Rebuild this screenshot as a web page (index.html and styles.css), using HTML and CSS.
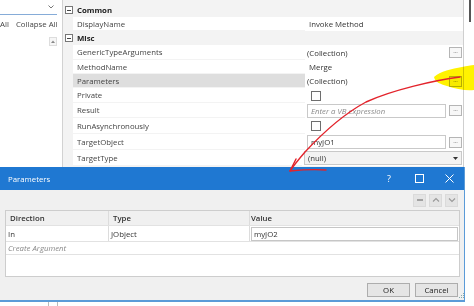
FILE: index.html
```html
<!DOCTYPE html>
<html lang="en">
<head>
  <meta charset="UTF-8" />
  <title>Invoke Method - Parameters</title>
  <link rel="stylesheet" href="styles.css">
</head>
<body>
  <div class="screen">

    <div class="top">
      <aside class="outline">
        <div class="outline-select">
          <svg class="chev" width="6" height="4" viewBox="0 0 6 4"><path d="M0.5 0.5 L3 3 L5.5 0.5" fill="none" stroke="#777" stroke-width="1"/></svg>
        </div>
        <div class="outline-links">
          <span>All</span>
          <span>Collapse All</span>
        </div>
        <div class="outline-body">
          <div class="scroll-up">
            <svg width="4" height="3" viewBox="0 0 4 3"><path d="M0 3 L2 0.5 L4 3 Z" fill="#888"/></svg>
          </div>
        </div>
      </aside>

      <section class="props">
        <div class="group"><span class="expander"></span>Common</div>
        <div class="prop">
          <div class="prop-name">DisplayName</div>
          <div class="prop-value"><span class="val">Invoke Method</span></div>
        </div>
        <div class="group"><span class="expander"></span>Misc</div>
        <div class="prop h15">
          <div class="prop-name">GenericTypeArguments</div>
          <div class="prop-value"><span class="val tight">(Collection)</span><span class="dots">...</span></div>
        </div>
        <div class="prop">
          <div class="prop-name">MethodName</div>
          <div class="prop-value"><span class="val">Merge</span></div>
        </div>
        <div class="prop selected">
          <div class="prop-name">Parameters</div>
          <div class="prop-value"><span class="val tight">(Collection)</span><span class="dots">...</span></div>
        </div>
        <div class="prop h15">
          <div class="prop-name">Private</div>
          <div class="prop-value"><span class="check"></span></div>
        </div>
        <div class="prop h15">
          <div class="prop-name">Result</div>
          <div class="prop-value"><span class="textbox placeholder">Enter a VB expression</span><span class="dots">...</span></div>
        </div>
        <div class="prop h16">
          <div class="prop-name">RunAsynchronously</div>
          <div class="prop-value"><span class="check"></span></div>
        </div>
        <div class="prop h16">
          <div class="prop-name">TargetObject</div>
          <div class="prop-value"><span class="textbox">myJO1</span><span class="dots">...</span></div>
        </div>
        <div class="prop h16">
          <div class="prop-name">TargetType</div>
          <div class="prop-value">
            <span class="combo">(null)
              <svg width="5" height="3" viewBox="0 0 5 3"><path d="M0 0 L5 0 L2.5 3 Z" fill="#333"/></svg>
            </span>
          </div>
        </div>
      </section>

      <div class="side-scroll"><span class="thumb"></span></div>
    </div>

    <div class="dialog">
      <div class="titlebar">
        <span class="title">Parameters</span>
        <span class="tb-btn">?</span>
        <span class="tb-btn"><span class="max-box"></span></span>
        <span class="tb-btn">
          <svg width="9" height="9" viewBox="0 0 9 9"><path d="M0.5 0.5 L8.5 8.5 M8.5 0.5 L0.5 8.5" stroke="#fff" stroke-width="1"/></svg>
        </span>
      </div>

      <div class="toolbar">
        <span class="tool">
          <svg width="8" height="8" viewBox="0 0 8 8"><path d="M1 4 H7" stroke="#777" stroke-width="1.2"/></svg>
        </span>
        <span class="tool">
          <svg width="8" height="8" viewBox="0 0 8 8"><path d="M1 5.5 L4 2.5 L7 5.5" fill="none" stroke="#999" stroke-width="1.1"/></svg>
        </span>
        <span class="tool">
          <svg width="8" height="8" viewBox="0 0 8 8"><path d="M1 2.5 L4 5.5 L7 2.5" fill="none" stroke="#999" stroke-width="1.1"/></svg>
        </span>
      </div>

      <div class="args">
        <div class="args-row args-head">
          <div class="cell">Direction</div>
          <div class="cell">Type</div>
          <div class="cell">Value</div>
        </div>
        <div class="args-row">
          <div class="cell">In</div>
          <div class="cell">JObject</div>
          <div class="cell"><span class="cell-input">myJO2</span></div>
        </div>
        <div class="args-create">Create Argument</div>
      </div>

      <div class="footer">
        <span class="btn">OK</span>
        <span class="btn">Cancel</span>
        <svg class="grip" width="5" height="5" viewBox="0 0 5 5">
          <rect x="4" y="0" width="1" height="1" fill="#8aa"/>
          <rect x="2" y="2" width="1" height="1" fill="#8aa"/>
          <rect x="4" y="2" width="1" height="1" fill="#8aa"/>
          <rect x="0" y="4" width="1" height="1" fill="#8aa"/>
          <rect x="2" y="4" width="1" height="1" fill="#8aa"/>
          <rect x="4" y="4" width="1" height="1" fill="#8aa"/>
        </svg>
      </div>
    </div>

    <div class="under"><span class="line l1"></span><span class="line l2"></span></div>

    <!-- hand drawn marks over the screenshot -->
    <svg class="marks" width="474" height="306" viewBox="0 0 474 306">
      <path class="highlight" d="M434 77 C440 71 452 69 462 67 C467 66 471 65 474 65 L474 90 C466 91 456 89 447 86 C440 84 435 82 434 77 Z"/>
      <path d="M460 77 C436 80 392 90 366 102 C340 116 318 138 305 152 C299 159 294 165 290 171" fill="none" stroke="#e3232b" stroke-width="1.4" stroke-linecap="round"/>
      <path d="M296 159 L290 171 C300 170 312 169 326 170" fill="none" stroke="#e3232b" stroke-width="1.4" stroke-linecap="round" stroke-linejoin="round"/>
    </svg>

  </div>
</body>
</html>
```

FILE: styles.css
```css
body {
  margin: 0;
}

.screen {
  position: relative;
  width: 474px;
  height: 306px;
  overflow: hidden;
  background: #fff;
  font-family: "Open Sans", "Noto Sans", sans-serif;
  font-size: 7.8px;
  color: #333;
}

.top {
  display: flex;
  height: 167px;
}

/* left outline panel */
.outline {
  width: 62px;
  border-right: 1px solid #d2d2d2;
  display: flex;
  flex-direction: column;
}

.outline-select {
  width: 57px;
  height: 14px;
  border-bottom: 1px solid #86acd8;
  display: flex;
  align-items: center;
  justify-content: flex-end;
}

.chev {
  margin-right: 3px;
}

.outline-links {
  height: 18px;
  display: flex;
  align-items: center;
  gap: 7px;
  color: #444;
}

.outline-body {
  flex: 1;
  width: 57px;
  display: flex;
  justify-content: flex-end;
  padding-top: 4px;
}

.scroll-up {
  width: 6px;
  height: 7px;
  border: 1px solid #ddd;
  background: #f6f6f6;
  display: flex;
  align-items: center;
  justify-content: center;
}

/* property grid */
.props {
  width: 400px;
  padding-top: 3px;
  background: #f3f3f3;
  border-right: 1px solid #cfcfcf;
}

.group {
  height: 14px;
  display: flex;
  align-items: center;
  font-weight: 700;
  color: #222;
}

.expander {
  position: relative;
  width: 6px;
  height: 6px;
  margin: 0 4px 0 2px;
  border: 1px solid #777;
  background: #fff;
}

.expander::after {
  content: "";
  position: absolute;
  left: 1px;
  top: 2.5px;
  width: 4px;
  height: 1px;
  background: #444;
}

.prop {
  height: 14px;
  margin-left: 10px;
  display: flex;
  background: #fff;
}

.prop.h15 {
  height: 15px;
}

.prop.h16 {
  height: 16px;
}

.prop-name {
  width: 228px;
  padding-left: 4px;
  display: flex;
  align-items: center;
  color: #444;
  border-bottom: 1px solid #f3f3f3;
}

.prop.selected .prop-name {
  background: #dedede;
}

.prop-value {
  flex: 1;
  display: flex;
  align-items: center;
  padding-left: 2px;
  padding-right: 1px;
}

.val {
  padding-left: 2px;
}

.val.tight {
  padding-left: 0;
}

.dots {
  margin-left: auto;
  width: 11px;
  height: 9px;
  border: 1px solid #b5b5b5;
  background: #f7f7f7;
  font-size: 6px;
  line-height: 6px;
  text-align: center;
  color: #555;
}

.check {
  width: 8px;
  height: 8px;
  margin-left: 4px;
  border: 1px solid #6e6e6e;
  background: #fff;
}

.textbox {
  width: 134px;
  height: 12px;
  padding-left: 3px;
  border: 1px solid #c9c9c9;
  display: flex;
  align-items: center;
}

.placeholder {
  font-style: italic;
  color: #8a8a8a;
}

.combo {
  width: 150px;
  height: 12px;
  padding: 0 3px;
  border: 1px solid #c9c9c9;
  background: #f3f3f3;
  display: flex;
  align-items: center;
  justify-content: space-between;
}

.side-scroll {
  flex: 1;
  position: relative;
}

.thumb {
  position: absolute;
  left: 5px;
  top: 0;
  width: 2px;
  height: 22px;
  background: #555;
}

/* Parameters dialog */
.dialog {
  width: 464px;
  height: 133px;
  background: #f0f0f0;
  border-right: 1px solid #5b9bd8;
  border-bottom: 2px solid #5b9bd8;
  display: flex;
  flex-direction: column;
}

.titlebar {
  height: 23px;
  background: #1f78d2;
  color: #fff;
  display: flex;
  align-items: center;
}

.title {
  flex: 1;
  padding-left: 8px;
}

.tb-btn {
  width: 30px;
  height: 23px;
  display: flex;
  align-items: center;
  justify-content: center;
  font-size: 9px;
}

.max-box {
  width: 7px;
  height: 7px;
  border: 1px solid #fff;
}

.toolbar {
  height: 20px;
  display: flex;
  justify-content: flex-end;
  align-items: center;
  gap: 3px;
  padding-right: 6px;
}

.tool {
  width: 11px;
  height: 11px;
  background: #e4e4e4;
  border: 1px solid #dadada;
  display: flex;
  align-items: center;
  justify-content: center;
}

.args {
  height: 65px;
  margin: 0 4px 0 5px;
  background: #fff;
  border: 1px solid #cdcdcd;
}

.args-row {
  display: grid;
  grid-template-columns: 103px 141px 1fr;
  height: 15px;
  border-bottom: 1px solid #e2e2e2;
}

.args-head {
  height: 14px;
  background: #f0f0f0;
  font-weight: 600;
  color: #333;
}

.cell {
  display: flex;
  align-items: center;
  padding-left: 2px;
  border-right: 1px solid #dcdcdc;
}

.args-head .cell {
  padding-left: 4px;
}

.cell:last-child {
  border-right: none;
  padding-left: 1px;
  padding-right: 1px;
}

.cell-input {
  flex: 1;
  height: 12px;
  padding-left: 2px;
  border: 1px solid #c6c6c6;
  display: flex;
  align-items: center;
}

.args-create {
  height: 12px;
  padding-left: 2px;
  display: flex;
  align-items: center;
  font-style: italic;
  color: #888;
  border-bottom: 1px solid #e2e2e2;
}

.footer {
  flex: 1;
  display: flex;
  justify-content: flex-end;
  align-items: flex-start;
  gap: 5px;
  padding: 6px 0 0;
  position: relative;
}

.btn {
  width: 41px;
  height: 12px;
  border: 1px solid #adadad;
  background: #e5e5e5;
  display: flex;
  align-items: center;
  justify-content: center;
  color: #222;
}

.grip {
  margin: 10px 0 0 -4px;
}

.under {
  position: relative;
  height: 4px;
}

.under .line {
  position: absolute;
  top: 0;
  width: 1px;
  height: 4px;
  background: #bbb;
}

.under .l1 {
  left: 48px;
}

.under .l2 {
  left: 57px;
}

/* annotation overlay */
.marks {
  position: absolute;
  left: 0;
  top: 0;
  pointer-events: none;
}

.highlight {
  fill: #fff200;
  mix-blend-mode: multiply;
}
```
